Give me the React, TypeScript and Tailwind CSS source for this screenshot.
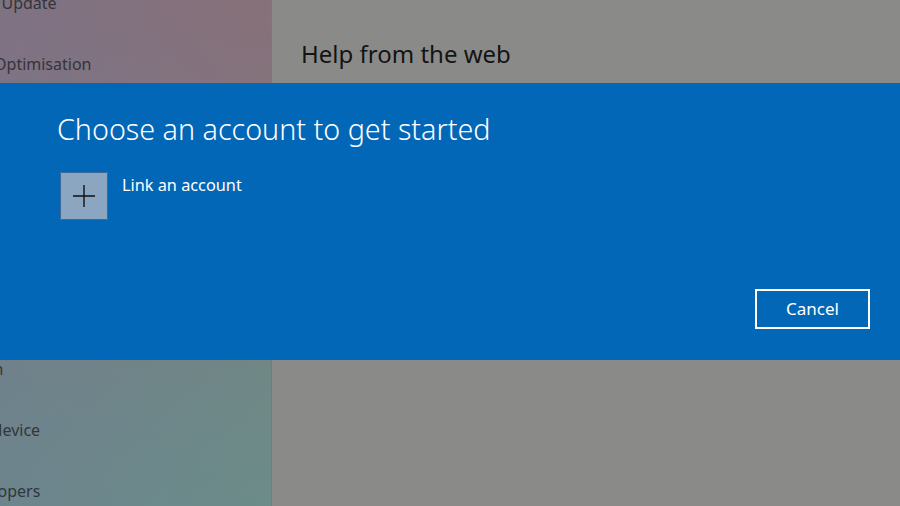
import React from "react";

const sidebarItems = [
    "Windows Update",
    "Delivery Optimisation",
    "Windows Security",
    "Backup",
    "Troubleshoot",
    "Recovery",
    "Activation",
    "Find my device",
    "For developers",
];

const App = () => {
    return (
        <div
            className="relative w-[900px] h-[506px] overflow-hidden flex"
            style={{ fontFamily: '"Noto Sans", "Open Sans", sans-serif' }}
        >
            {/* settings nav, dimmed behind the dialog */}
            <div className="w-[272px] shrink-0 overflow-hidden border-r border-[#8d7078] bg-[linear-gradient(to_right,rgba(112,118,150,0.35),rgba(140,110,118,0)),linear-gradient(to_bottom,#877079_0%,#82757f_35%,#6f8886_75%,#6b8c89_100%)]">
                <div className="flex flex-col gap-[38px] ml-[-71px] mt-[-8px]">
                    {sidebarItems.map((item, index) => (
                        <div
                            key={index}
                            className="h-[23px] text-[16px] leading-[23px] whitespace-nowrap text-[#33353a]"
                        >
                            {item}
                        </div>
                    ))}
                </div>
            </div>

            <div className="flex-1 bg-[#8a8b89] pl-[29px] pt-[38px]">
                <div className="text-[24px] leading-[32px] text-[#141414]">
                    Help from the web
                </div>
            </div>

            {/* account picker dialog */}
            <div className="absolute left-0 right-0 top-[83px] h-[277px] bg-[#0367b8] flex flex-col pl-[57px] pr-[30px]">
                <div className="mt-[27px] text-[28.7px] leading-[38px] font-light text-white">
                    Choose an account to get started
                </div>
                <div className="mt-[24px] flex items-start gap-[14px]">
                    <div className="w-[48px] h-[48px] ml-[3px] border border-[#3b6a98] bg-[#8ba6c1] flex items-center justify-center">
                        <svg width="24" height="24" viewBox="0 0 24 24">
                            <path d="M12 1V23M1 12H23" stroke="#111" strokeWidth="1.4" fill="none" />
                        </svg>
                    </div>
                    <div className="mt-[2px] text-[16.3px] leading-[22px] text-white">
                        Link an account
                    </div>
                </div>
                <div className="mt-auto mb-[31px] flex justify-end">
                    <button className="w-[115px] h-[40px] border-2 border-white text-white text-[17px] leading-[22px]">
                        Cancel
                    </button>
                </div>
            </div>
        </div>
    );
};

export default App;
